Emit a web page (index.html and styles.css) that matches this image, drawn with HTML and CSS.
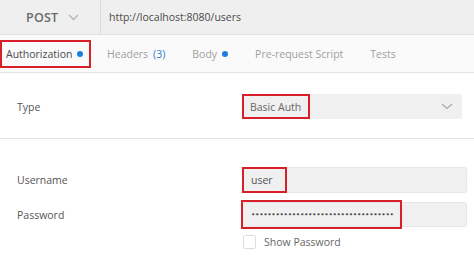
FILE: index.html
```html
<!DOCTYPE html>
<html>
<head>
<meta charset="utf-8">
<link rel="stylesheet" href="styles.css">
</head>
<body>
<div class="urlbar">
  <div class="method">
    <span class="method-text">POST</span>
    <svg class="chev" width="11" height="7" viewBox="0 0 11 7"><path d="M1 1 L5.5 5.5 L10 1" fill="none" stroke="#b5b5b5" stroke-width="1.3"/></svg>
  </div>
  <div class="url">http://localhost:8080/users</div>
</div>
<div class="tabs">
  <div class="tab tab-active mark">Authorization <span class="dot"></span></div>
  <div class="tab">Headers <span class="count">(3)</span></div>
  <div class="tab">Body <span class="dot"></span></div>
  <div class="tab">Pre-request Script</div>
  <div class="tab">Tests</div>
</div>
<div class="section section-type">
  <div class="label">Type</div>
  <div class="select">
    <span class="mark mark-select">Basic Auth</span>
    <svg class="chev2" width="12" height="7" viewBox="0 0 12 7"><path d="M1 1 L6 5.5 L11 1" fill="none" stroke="#aaa" stroke-width="1.3"/></svg>
  </div>
</div>
<div class="section section-creds">
  <div class="label">Username</div>
  <div class="input"><span class="mark mark-user">user</span></div>
  <div class="label">Password</div>
  <div class="input input-pass"><span class="mark mark-pass">&bull;&bull;&bull;&bull;&bull;&bull;&bull;&bull;&bull;&bull;&bull;&bull;&bull;&bull;&bull;&bull;&bull;&bull;&bull;&bull;&bull;&bull;&bull;&bull;&bull;&bull;&bull;&bull;&bull;&bull;&bull;&bull;&bull;&bull;&bull;</span></div>
  <div></div>
  <label class="check"><span class="box"></span>Show Password</label>
</div>
</body>
</html>
```
FILE: styles.css
```css
* { box-sizing: border-box; }
body {
  margin: 0;
  width: 474px;
  height: 268px;
  overflow: hidden;
  background: #fff;
  font-family: "Open Sans", "DejaVu Sans", sans-serif;
  color: #555;
}
.urlbar {
  height: 35px;
  background: #efefef;
  border-bottom: 1px solid #e2e2e2;
  display: flex;
}
.method {
  width: 101px;
  border-right: 1px solid #dcdcdc;
  display: flex;
  align-items: center;
  padding-left: 26px;
  gap: 10px;
}
.method-text {
  font-size: 12.5px;
  font-weight: 600;
  color: #6a6a6a;
  letter-spacing: 0.2px;
}
.url {
  display: flex;
  align-items: center;
  padding-left: 8px;
  font-size: 10.5px;
  color: #4a4a4a;
}
.tabs {
  height: 38px;
  background: #fafafa;
  border-bottom: 1px solid #e4e4e4;
  display: flex;
  align-items: center;
  padding-top: 1px;
}
.tab {
  font-size: 10.5px;
  color: #a0a0a0;
  display: flex;
  align-items: center;
  gap: 5px;
  margin-right: 27px;
}
.tab-active {
  color: #4a4a4a;
  width: 91px;
  height: 28px;
  padding-left: 4px;
  margin-right: 16px;
}
.dot {
  width: 6px;
  height: 6px;
  border-radius: 50%;
  background: #1a7fe0;
  display: inline-block;
}
.count { color: #2f80d0; }
.mark { border: 2px solid #d8202a; }
.section {
  display: grid;
  grid-template-columns: 225px 1fr;
  align-items: center;
  padding-left: 17px;
  padding-right: 7px;
}
.section-type {
  padding-top: 21px;
  padding-bottom: 19px;
  border-bottom: 1px solid #e3e3e3;
}
.label {
  font-size: 10.5px;
  color: #555;
}
.select {
  height: 25px;
  margin-right: 5px;
  background: #f0f0f0;
  border-radius: 3px;
  display: flex;
  align-items: center;
  justify-content: space-between;
  padding-right: 9px;
}
.mark-select {
  height: 25px;
  width: 68px;
  display: flex;
  align-items: center;
  padding-left: 6px;
  font-size: 10.5px;
  color: #666;
}
.section-creds {
  padding-top: 28px;
  row-gap: 9px;
}
.input {
  height: 26px;
  background: #f0f0f0;
  border: 1px solid #e6e6e6;
  border-radius: 3px;
  display: flex;
  align-items: center;
}
.mark-user {
  height: 26px;
  width: 45px;
  margin: -1px;
  display: flex;
  align-items: center;
  padding-left: 7px;
  font-size: 10.5px;
  color: #555;
}
.input-pass { height: 25px; }
.mark-pass {
  height: 29px;
  width: 161px;
  margin-left: -2px;
  display: flex;
  align-items: center;
  padding-left: 8px;
  font-size: 7.5px;
  letter-spacing: -0.35px;
  color: #4a4a4a;
  font-family: "DejaVu Sans", sans-serif;
  overflow: hidden;
  white-space: nowrap;
}
.check {
  display: flex;
  align-items: center;
  gap: 8px;
  font-size: 10.5px;
  color: #666;
  padding-left: 1px;
  margin-top: -1px;
}
.box {
  width: 13px;
  height: 14px;
  border: 1px solid #ddd;
  background: #fff;
  border-radius: 2px;
}
```
